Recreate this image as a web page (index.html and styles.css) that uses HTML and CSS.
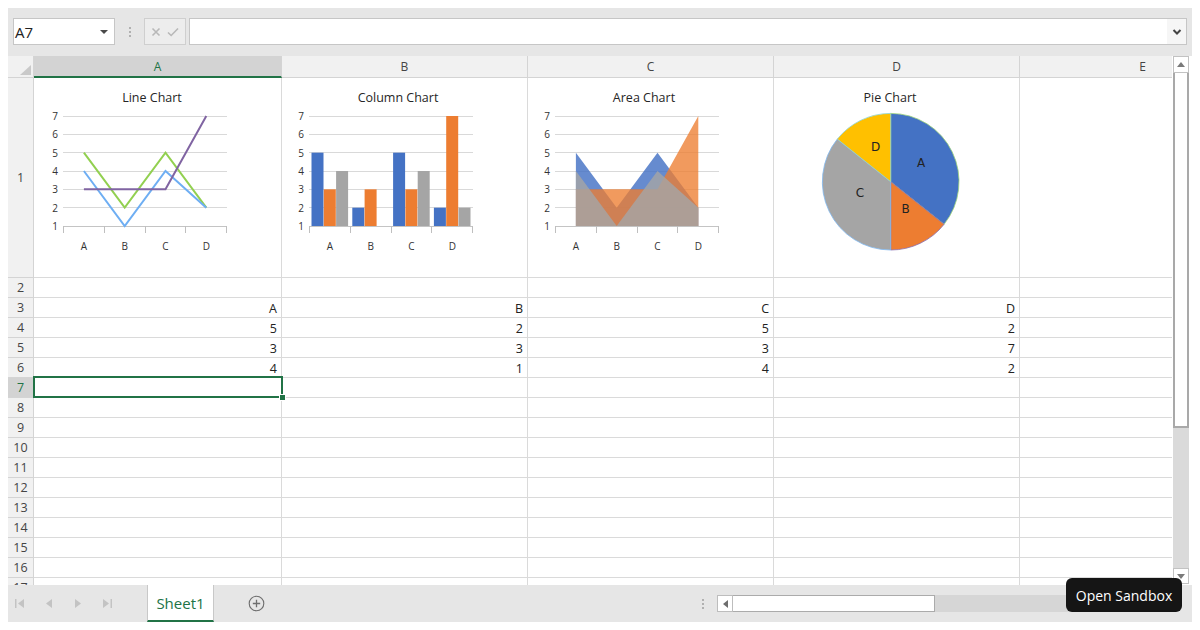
FILE: index.html
```html
<!DOCTYPE html>
<html>
<head>
<meta charset="utf-8">
<link rel="stylesheet" href="styles.css">
</head>
<body>
<div class="app">
  <div class="toolbar">
    <div class="namebox"><span class="nb-text">A7</span><span class="caret"></span></div>
    <div class="vdots"><i></i><i></i><i></i></div>
    <div class="fxbtns">
      <svg width="10" height="10" viewBox="0 0 10 10"><path d="M1.5 1.5 L8.5 8.5 M8.5 1.5 L1.5 8.5" stroke="#b8b8b8" stroke-width="1.6" fill="none"/></svg>
      <svg width="12" height="10" viewBox="0 0 12 10"><path d="M1 5.5 L4.2 8.5 L11 1.5" stroke="#b8b8b8" stroke-width="1.6" fill="none"/></svg>
    </div>
    <div class="formula">
      <div class="fexpand"><svg width="10" height="6" viewBox="0 0 10 6"><path d="M1.5 1 L5 4.5 L8.5 1" stroke="#444" stroke-width="2" fill="none"/></svg></div>
    </div>
  </div>

  <div class="sheet">
    <div class="viewport">
      <div class="grid">
        <div class="corner"><svg width="25" height="21" viewBox="0 0 25 21"><polygon points="23,9 23,19 12,19" fill="#c9c9c9"/></svg></div>
        <div class="ch sel">A</div><div class="ch">B</div><div class="ch">C</div><div class="ch">D</div><div class="ch">E</div>

        <div class="rh r1">1</div>
        <div class="cell chart-cell">
          <svg class="chart" width="247" height="199" viewBox="0 0 247 199">
            <g transform="translate(2 0)">
              <text class="ct" x="116" y="23.5">Line Chart</text>
              <g class="gl">
                <line x1="27.3" y1="38.5" x2="190.7" y2="38.5"/>
                <line x1="27.3" y1="56.5" x2="190.7" y2="56.5"/>
                <line x1="27.3" y1="74.5" x2="190.7" y2="74.5"/>
                <line x1="27.3" y1="93.5" x2="190.7" y2="93.5"/>
                <line x1="27.3" y1="111.5" x2="190.7" y2="111.5"/>
                <line x1="27.3" y1="129.5" x2="190.7" y2="129.5"/>
                <line class="base" x1="27.3" y1="148.5" x2="190.7" y2="148.5"/>
              </g>
              <g class="tk">
                <line x1="27.5" y1="148" x2="27.5" y2="155"/>
                <line x1="68.5" y1="148" x2="68.5" y2="155"/>
                <line x1="109.5" y1="148" x2="109.5" y2="155"/>
                <line x1="149.5" y1="148" x2="149.5" y2="155"/>
                <line x1="190.5" y1="148" x2="190.5" y2="155"/>
              </g>
              <g class="yl">
                <text x="22" y="42">7</text><text x="22" y="60">6</text><text x="22" y="78.5">5</text><text x="22" y="97">4</text><text x="22" y="115">3</text><text x="22" y="133.5">2</text><text x="22" y="152">1</text>
              </g>
              <g class="xl">
                <text x="47.9" y="171.5">A</text><text x="88.7" y="171.5">B</text><text x="129.5" y="171.5">C</text><text x="170.3" y="171.5">D</text>
              </g>
              <polyline class="ln" stroke="#92d050" points="47.9,74.67 88.7,129.67 129.5,74.67 170.3,129.67"/>
              <polyline class="ln" stroke="#6eaef3" points="47.9,93 88.7,148 129.5,93 170.3,129.67"/>
              <polyline class="ln" stroke="#8064a2" points="47.9,111.33 88.7,111.33 129.5,111.33 170.3,38"/>
            </g>
          </svg>
        </div>
        <div class="cell chart-cell">
          <svg class="chart" width="245" height="199" viewBox="0 0 245 199">
            <text class="ct" x="116" y="23.5">Column Chart</text>
            <g class="gl">
              <line x1="27.3" y1="38.5" x2="190.7" y2="38.5"/>
              <line x1="27.3" y1="56.5" x2="190.7" y2="56.5"/>
              <line x1="27.3" y1="74.5" x2="190.7" y2="74.5"/>
              <line x1="27.3" y1="93.5" x2="190.7" y2="93.5"/>
              <line x1="27.3" y1="111.5" x2="190.7" y2="111.5"/>
              <line x1="27.3" y1="129.5" x2="190.7" y2="129.5"/>
              <line class="base" x1="27.3" y1="148.5" x2="190.7" y2="148.5"/>
            </g>
            <g class="tk">
              <line x1="27.5" y1="148" x2="27.5" y2="155"/>
              <line x1="68.5" y1="148" x2="68.5" y2="155"/>
              <line x1="109.5" y1="148" x2="109.5" y2="155"/>
              <line x1="149.5" y1="148" x2="149.5" y2="155"/>
              <line x1="190.5" y1="148" x2="190.5" y2="155"/>
            </g>
            <g class="yl">
              <text x="22" y="42">7</text><text x="22" y="60">6</text><text x="22" y="78.5">5</text><text x="22" y="97">4</text><text x="22" y="115">3</text><text x="22" y="133.5">2</text><text x="22" y="152">1</text>
            </g>
            <g class="xl">
              <text x="47.9" y="171.5">A</text><text x="88.7" y="171.5">B</text><text x="129.5" y="171.5">C</text><text x="170.3" y="171.5">D</text>
            </g>
            <g>
              <rect x="29.5" y="74.67" width="12" height="73.33" fill="#4472c4"/>
              <rect x="41.8" y="111.33" width="12" height="36.67" fill="#ed7d31"/>
              <rect x="54.1" y="93" width="12" height="55" fill="#a5a5a5"/>
              <rect x="70.3" y="129.67" width="12" height="18.33" fill="#4472c4"/>
              <rect x="82.6" y="111.33" width="12" height="36.67" fill="#ed7d31"/>
              <rect x="111.1" y="74.67" width="12" height="73.33" fill="#4472c4"/>
              <rect x="123.4" y="111.33" width="12" height="36.67" fill="#ed7d31"/>
              <rect x="135.7" y="93" width="12" height="55" fill="#a5a5a5"/>
              <rect x="151.9" y="129.67" width="12" height="18.33" fill="#4472c4"/>
              <rect x="164.2" y="38" width="12" height="110" fill="#ed7d31"/>
              <rect x="176.5" y="129.67" width="12" height="18.33" fill="#a5a5a5"/>
            </g>
          </svg>
        </div>
        <div class="cell chart-cell">
          <svg class="chart" width="245" height="199" viewBox="0 0 245 199">
            <text class="ct" x="116" y="23.5">Area Chart</text>
            <g class="gl">
              <line x1="27.3" y1="38.5" x2="190.7" y2="38.5"/>
              <line x1="27.3" y1="56.5" x2="190.7" y2="56.5"/>
              <line x1="27.3" y1="74.5" x2="190.7" y2="74.5"/>
              <line x1="27.3" y1="93.5" x2="190.7" y2="93.5"/>
              <line x1="27.3" y1="111.5" x2="190.7" y2="111.5"/>
              <line x1="27.3" y1="129.5" x2="190.7" y2="129.5"/>
              <line class="base" x1="27.3" y1="148.5" x2="190.7" y2="148.5"/>
            </g>
            <g class="tk">
              <line x1="27.5" y1="148" x2="27.5" y2="155"/>
              <line x1="68.5" y1="148" x2="68.5" y2="155"/>
              <line x1="109.5" y1="148" x2="109.5" y2="155"/>
              <line x1="149.5" y1="148" x2="149.5" y2="155"/>
              <line x1="190.5" y1="148" x2="190.5" y2="155"/>
            </g>
            <g class="yl">
              <text x="22" y="42">7</text><text x="22" y="60">6</text><text x="22" y="78.5">5</text><text x="22" y="97">4</text><text x="22" y="115">3</text><text x="22" y="133.5">2</text><text x="22" y="152">1</text>
            </g>
            <g class="xl">
              <text x="47.9" y="171.5">A</text><text x="88.7" y="171.5">B</text><text x="129.5" y="171.5">C</text><text x="170.3" y="171.5">D</text>
            </g>
            <polygon fill="#4472c4" fill-opacity="0.82" points="47.9,74.67 88.7,129.67 129.5,74.67 170.3,129.67 170.3,148 47.9,148"/>
            <polygon fill="#ed7d31" fill-opacity="0.78" points="47.9,111.33 88.7,111.33 129.5,111.33 170.3,38 170.3,148 47.9,148"/>
            <polygon fill="#a5a5a5" fill-opacity="0.82" points="47.9,93 88.7,148 129.5,93 170.3,129.67 170.3,148 47.9,148"/>
          </svg>
        </div>
        <div class="cell chart-cell">
          <svg class="chart" width="245" height="199" viewBox="0 0 245 199">
            <text class="ct" x="116" y="23.5">Pie Chart</text>
            <path d="M116.7,103.7 L116.7,35.4 A68.3,68.3 0 0 1 170.1,146.3 Z" fill="#4472c4" stroke="#9ad27a" stroke-width="0.8"/>
            <path d="M116.7,103.7 L170.1,146.3 A68.3,68.3 0 0 1 116.7,172 Z" fill="#ed7d31" stroke="#8a6fb0" stroke-width="0.8"/>
            <path d="M116.7,103.7 L116.7,172 A68.3,68.3 0 0 1 63.3,61.1 Z" fill="#a5a5a5" stroke="#7fb8f0" stroke-width="0.8"/>
            <path d="M116.7,103.7 L63.3,61.1 A68.3,68.3 0 0 1 116.7,35.4 Z" fill="#ffc000" stroke="#8fd4d0" stroke-width="0.8"/>
            <g class="pl">
              <text x="147" y="88.5">A</text>
              <text x="131.7" y="134.5">B</text>
              <text x="86" y="118.5">C</text>
              <text x="101.7" y="72.5">D</text>
            </g>
          </svg>
        </div>
        <div class="cell"></div>

        <div class="rh">2</div><div class="cell"></div><div class="cell"></div><div class="cell"></div><div class="cell"></div><div class="cell"></div>
        <div class="rh">3</div><div class="cell">A</div><div class="cell">B</div><div class="cell">C</div><div class="cell">D</div><div class="cell"></div>
        <div class="rh">4</div><div class="cell">5</div><div class="cell">2</div><div class="cell">5</div><div class="cell">2</div><div class="cell"></div>
        <div class="rh">5</div><div class="cell">3</div><div class="cell">3</div><div class="cell">3</div><div class="cell">7</div><div class="cell"></div>
        <div class="rh">6</div><div class="cell">4</div><div class="cell">1</div><div class="cell">4</div><div class="cell">2</div><div class="cell"></div>
        <div class="rh sel">7</div><div class="cell"></div><div class="cell"></div><div class="cell"></div><div class="cell"></div><div class="cell"></div>
        <div class="rh">8</div><div class="cell"></div><div class="cell"></div><div class="cell"></div><div class="cell"></div><div class="cell"></div>
        <div class="rh">9</div><div class="cell"></div><div class="cell"></div><div class="cell"></div><div class="cell"></div><div class="cell"></div>
        <div class="rh">10</div><div class="cell"></div><div class="cell"></div><div class="cell"></div><div class="cell"></div><div class="cell"></div>
        <div class="rh">11</div><div class="cell"></div><div class="cell"></div><div class="cell"></div><div class="cell"></div><div class="cell"></div>
        <div class="rh">12</div><div class="cell"></div><div class="cell"></div><div class="cell"></div><div class="cell"></div><div class="cell"></div>
        <div class="rh">13</div><div class="cell"></div><div class="cell"></div><div class="cell"></div><div class="cell"></div><div class="cell"></div>
        <div class="rh">14</div><div class="cell"></div><div class="cell"></div><div class="cell"></div><div class="cell"></div><div class="cell"></div>
        <div class="rh">15</div><div class="cell"></div><div class="cell"></div><div class="cell"></div><div class="cell"></div><div class="cell"></div>
        <div class="rh">16</div><div class="cell"></div><div class="cell"></div><div class="cell"></div><div class="cell"></div><div class="cell"></div>
        <div class="rh">17</div><div class="cell"></div><div class="cell"></div><div class="cell"></div><div class="cell"></div><div class="cell"></div>
      </div>
      <div class="selection"><span class="handle"></span></div>
    </div>
    <div class="vscroll">
      <div class="vs-btn"><svg width="8" height="5" viewBox="0 0 8 5"><polygon points="0,5 8,5 4,0" fill="#7a7a7a"/></svg></div>
      <div class="vs-thumb"></div>
      <div class="vs-track"></div>
      <div class="vs-btn down"><svg width="8" height="5" viewBox="0 0 8 5"><polygon points="0,0 8,0 4,5" fill="#7a7a7a"/></svg></div>
    </div>
  </div>

  <div class="tabbar">
    <div class="nav">
      <svg width="10" height="9" viewBox="0 0 10 9"><rect x="0" y="0" width="1.5" height="9" fill="#c3c3c3"/><polygon points="9,0 9,9 3,4.5" fill="#c3c3c3"/></svg>
      <svg width="10" height="9" viewBox="0 0 10 9"><polygon points="8,0 8,9 2,4.5" fill="#c3c3c3"/></svg>
      <svg width="10" height="9" viewBox="0 0 10 9"><polygon points="2,0 2,9 8,4.5" fill="#c3c3c3"/></svg>
      <svg width="10" height="9" viewBox="0 0 10 9"><polygon points="1,0 1,9 7,4.5" fill="#c3c3c3"/><rect x="8.5" y="0" width="1.5" height="9" fill="#c3c3c3"/></svg>
    </div>
    <div class="tab">Sheet1</div>
    <div class="add"><svg width="17" height="17" viewBox="0 0 17 17"><circle cx="8.5" cy="8.5" r="7.3" fill="none" stroke="#6e6e6e" stroke-width="1.1"/><path d="M8.5 4.8 V12.2 M4.8 8.5 H12.2" stroke="#6e6e6e" stroke-width="1.3"/></svg></div>
    <div class="spacer"></div>
    <div class="hdots"><i></i><i></i><i></i></div>
    <div class="hscroll">
      <div class="hs-btn"><svg width="5" height="8" viewBox="0 0 5 8"><polygon points="5,0 5,8 0,4" fill="#6e6e6e"/></svg></div>
      <div class="hs-thumb"></div>
      <div class="hs-track"></div>
      <div class="hs-btn right"><svg width="5" height="8" viewBox="0 0 5 8"><polygon points="0,0 0,8 5,4" fill="#6e6e6e"/></svg></div>
    </div>
  </div>

  <div class="tooltip">Open Sandbox</div>
</div>
</body>
</html>
```

FILE: styles.css
```css
* { box-sizing: border-box; }

body {
  margin: 8px;
  font-family: "Open Sans", "Noto Sans", sans-serif;
  color: #333;
  background: #fff;
}

.app {
  position: relative;
  width: 1184px;
  height: 614px;
  display: flex;
  flex-direction: column;
  background: #fff;
}

/* toolbar */
.toolbar {
  height: 48px;
  flex: none;
  background: #e6e6e6;
  display: flex;
  align-items: flex-start;
  padding: 10px 5px 0 5px;
}

.namebox {
  width: 102px;
  height: 27px;
  background: #fff;
  border: 1px solid #c6c6c6;
  display: flex;
  align-items: center;
  justify-content: space-between;
  padding: 0 6px 0 1px;
  font-size: 15px;
  color: #222;
}

.caret {
  width: 0;
  height: 0;
  border-left: 4px solid transparent;
  border-right: 4px solid transparent;
  border-top: 4px solid #4a4a4a;
}

.vdots {
  width: 29px;
  height: 27px;
  display: flex;
  flex-direction: column;
  align-items: center;
  justify-content: center;
  gap: 2px;
}

.vdots i, .hdots i {
  display: block;
  width: 2px;
  height: 2px;
  background: #b0b0b0;
}

.fxbtns {
  width: 42px;
  height: 27px;
  border: 1px solid #cfcfcf;
  background: #ededed;
  display: flex;
  align-items: center;
  justify-content: space-around;
  padding: 0 3px;
}

.formula {
  margin-left: 3px;
  flex: 1;
  height: 27px;
  border: 1px solid #c6c6c6;
  background: #fff;
  display: flex;
  justify-content: flex-end;
}

.fexpand {
  width: 19px;
  height: 100%;
  display: flex;
  align-items: center;
  justify-content: center;
  background: #f6f6f6;
}

/* sheet */
.sheet {
  display: flex;
  height: 529px;
  flex: none;
}

.viewport {
  position: relative;
  width: 1164px;
  height: 529px;
  overflow: hidden;
}

.grid {
  display: grid;
  grid-template-columns: 26px 248px 246px 246px 246px 246px;
  grid-template-rows: 22px 200px repeat(16, 20px);
  width: max-content;
}

.corner {
  background: #f1f1f1;
  border-right: 1px solid #d4d4d4;
  border-bottom: 1px solid #d4d4d4;
}

.corner svg { display: block; }

.ch {
  background: #f1f1f1;
  border-right: 1px solid #d4d4d4;
  border-bottom: 1px solid #d4d4d4;
  text-align: center;
  font-size: 12px;
  line-height: 21px;
  color: #444;
}

.ch.sel {
  background: #d3d3d3;
  color: #217346;
  border-bottom: 2px solid #217346;
}

.rh {
  background: #f1f1f1;
  border-right: 1px solid #d4d4d4;
  border-bottom: 1px solid #d4d4d4;
  text-align: center;
  font-size: 12.5px;
  line-height: 19px;
  color: #444;
}

.rh.r1 {
  display: flex;
  align-items: center;
  justify-content: center;
}

.rh.sel {
  background: #d3d3d3;
  color: #217346;
}

.cell {
  border-right: 1px solid #dadada;
  border-bottom: 1px solid #dadada;
  font-size: 12.5px;
  text-align: right;
  padding: 1px 4px 0 4px;
  line-height: 19px;
  white-space: nowrap;
  overflow: hidden;
  color: #222;
}

.chart-cell { padding: 0; }

.chart {
  display: block;
  overflow: visible;
  font-family: "Open Sans", "Noto Sans", sans-serif;
}

.chart .ct {
  font-size: 12.5px;
  fill: #262626;
  text-anchor: middle;
}

.chart .gl line {
  stroke: #d9d9d9;
  stroke-width: 1;
  shape-rendering: crispEdges;
}

.chart .gl line.base { stroke: #c4c4c4; }

.chart .tk line {
  stroke: #bfbfbf;
  stroke-width: 1;
  shape-rendering: crispEdges;
}

.chart .yl text {
  font-size: 10px;
  fill: #333;
  text-anchor: end;
}

.chart .xl text {
  font-size: 10px;
  fill: #333;
  text-anchor: middle;
}

.chart .ln {
  fill: none;
  stroke-width: 2;
  stroke-linejoin: miter;
}

.chart .pl text {
  font-family: "DejaVu Sans", sans-serif;
  font-size: 12px;
  fill: #222;
  text-anchor: middle;
}

.selection {
  position: absolute;
  left: 25px;
  top: 320px;
  width: 250px;
  height: 22px;
  border: 2px solid #217346;
}

.handle {
  position: absolute;
  right: -5px;
  bottom: -5px;
  width: 7px;
  height: 7px;
  background: #217346;
  border: 1px solid #fff;
}

/* vertical scrollbar */
.vscroll {
  width: 20px;
  display: flex;
  flex-direction: column;
  padding: 0 3px 1px 1px;
  background: #fff;
}

.vs-btn {
  height: 17px;
  flex: none;
  border: 1px solid #c2c2c2;
  background: #fff;
  display: flex;
  align-items: center;
  justify-content: center;
}

.vs-btn.down { height: 16px; }

.vs-thumb {
  height: 355px;
  flex: none;
  background: #fff;
  border: 2px solid #a9a9a9;
  border-top: none;
}

.vs-track {
  flex: 1;
  background: #dadada;
}

/* tab bar */
.tabbar {
  height: 37px;
  flex: none;
  background: #e6e6e6;
  display: flex;
  align-items: stretch;
}

.nav {
  width: 139px;
  display: flex;
  align-items: center;
  gap: 19px;
  padding-left: 7px;
}

.nav svg { display: block; }

.tab {
  width: 67px;
  background: #fff;
  border-left: 1px solid #c8c8c8;
  border-right: 1px solid #c8c8c8;
  border-bottom: 2px solid #217346;
  color: #217346;
  font-size: 15px;
  display: flex;
  align-items: center;
  justify-content: center;
  padding-top: 1px;
}

.add {
  width: 84px;
  display: flex;
  align-items: center;
  justify-content: center;
}

.spacer { flex: 1; }

.hdots {
  width: 14px;
  display: flex;
  flex-direction: column;
  align-items: center;
  justify-content: center;
  gap: 2px;
}

.hscroll {
  width: 459px;
  margin-left: 7px;
  margin-right: 16px;
  height: 17px;
  align-self: center;
  display: flex;
}

.hs-btn {
  width: 16px;
  flex: none;
  border: 1px solid #bdbdbd;
  background: #fff;
  display: flex;
  align-items: center;
  justify-content: center;
}

.hs-thumb {
  width: 202px;
  flex: none;
  background: #fff;
  border: 1px solid #ababab;
  border-left: none;
}

.hs-track {
  flex: 1;
  background: #d6d6d6;
}

.tooltip {
  position: absolute;
  right: 10px;
  bottom: 10px;
  width: 116px;
  height: 34px;
  background: #151515;
  border-radius: 6px;
  color: #fff;
  font-size: 14px;
  display: flex;
  align-items: center;
  justify-content: center;
}
```
